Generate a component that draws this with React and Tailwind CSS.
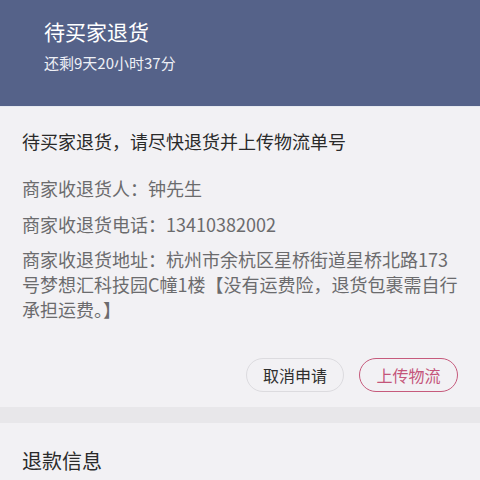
export default function App() {
  const font = { fontFamily: '"Noto Sans CJK SC", "Noto Sans", sans-serif' };
  return (
    <div className="w-[480px] h-[480px] overflow-hidden bg-[#f2f1f4]" style={font}>
      <div className="h-[107px] bg-[#556289] pl-[44px] pt-[16px] border-b border-[#e6e9f0]">
        <div className="text-[21px] leading-[30px] text-white">待买家退货</div>
        <div className="text-[15px] leading-[22px] mt-[6px] text-[#eef0f6]">还剩9天20小时37分</div>
      </div>
      <div className="px-[22px] pt-[21px]">
        <div className="text-[18px] leading-[26px] text-[#2a2a2a]">待买家退货，请尽快退货并上传物流单号</div>
        <div className="mt-[21px] flex flex-col gap-[10px] text-[18px] leading-[26px] text-[#6b6b6d]">
          <div>商家收退货人：钟先生</div>
          <div>商家收退货电话：13410382002</div>
          <div className="leading-[25px]">
            商家收退货地址：杭州市余杭区星桥街道星桥北路173号梦想汇科技园C幢1楼【没有运费险，退货包裹需自行承担运费。】
          </div>
        </div>
        <div className="mt-[36px] flex justify-end gap-[15px]">
          <button className="w-[98px] h-[34px] rounded-full border border-[#dcdbdf] text-[16px] text-[#2e2e2e]">取消申请</button>
          <button className="w-[99px] h-[34px] rounded-full border-[1.5px] border-[#c65a7c] text-[16px] text-[#c4557a]">上传物流</button>
        </div>
      </div>
      <div className="mt-[15px] h-[16px] bg-[#e8e7ea]"></div>
      <div className="px-[22px] pt-[24px] text-[20px] leading-[28px] text-[#2a2a2a]">退款信息</div>
    </div>
  );
}
